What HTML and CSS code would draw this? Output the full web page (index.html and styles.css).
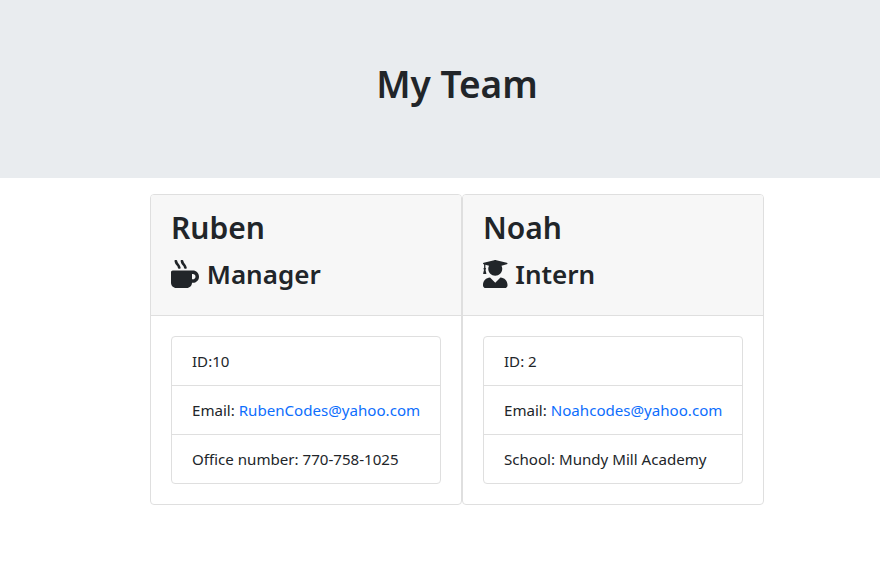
FILE: index.html
```html
<!DOCTYPE html>
<html lang="en">
<head>
    <meta charset="UTF-8">
    <meta name="viewport" content="width=device-width, initial-scale=1.0">
    <title>My Team</title>
    <link rel="stylesheet" href="styles.css">
</head>
<body>
    <header class="banner">
        <h1>My Team</h1>
    </header>

    <main class="team">
        <div class="card card-manager">
            <div class="card-header">
                <h2>Ruben</h2>
                <h3>
                    <svg class="icon" viewBox="0 0 512 512" width="28" height="28"><path d="M127.1 146.5c1.3 7.7 8 13.5 16 13.5h16.5c9.8 0 17.6-8.5 16.3-18-3.8-28.2-16.4-54.2-36.6-74.7-14.4-14.7-23.6-33.3-26.4-53.5C111.8 5.9 105 0 96.8 0H80.4C70.6 0 63 8.5 64.1 18c3.9 31.9 18 61.3 40.6 84.4 12 12.2 19.7 27.5 22.4 44.1zm112 0c1.3 7.7 8 13.5 16 13.5h16.5c9.8 0 17.6-8.5 16.3-18-3.8-28.2-16.4-54.2-36.6-74.7-14.4-14.7-23.6-33.3-26.4-53.5C223.8 5.9 217 0 208.8 0h-16.4c-9.8 0-17.5 8.5-16.3 18 3.9 31.9 18 61.3 40.6 84.4 12 12.2 19.7 27.5 22.4 44.1zM400 192H32c-17.7 0-32 14.3-32 32v192c0 53 43 96 96 96h192c53 0 96-43 96-96h16c61.8 0 112-50.2 112-112s-50.2-112-112-112zm0 160h-16V256h16c26.5 0 48 21.5 48 48s-21.5 48-48 48z"/></svg>
                    Manager
                </h3>
            </div>
            <div class="card-body">
                <ul class="list">
                    <li>ID:10</li>
                    <li>Email: <a href="#">RubenCodes@yahoo.com</a></li>
                    <li>Office number: 770-758-1025</li>
                </ul>
            </div>
        </div>

        <div class="card card-intern">
            <div class="card-header">
                <h2>Noah</h2>
                <h3>
                    <svg class="icon" viewBox="0 0 448 512" width="24.5" height="28"><path d="M319.4 320.6L224 416l-95.4-95.4C57.1 323.7 0 382.2 0 454.4v9.6c0 26.5 21.5 48 48 48h352c26.5 0 48-21.5 48-48v-9.6c0-72.2-57.1-130.7-128.6-133.8zM13.6 79.8l6.4 1.5v58.4c-7 4.2-12 11.5-12 20.3 0 8.4 4.6 15.4 11.1 19.7L3.5 242c-1.7 6.9 2.1 14 7.6 14h41.8c5.5 0 9.3-7.1 7.6-14l-15.6-62.3C51.4 175.4 56 168.4 56 160c0-8.8-5-16.1-12-20.3V87.1l66 15.9c-8.6 17.2-14 36.4-14 57 0 70.7 57.3 128 128 128s128-57.3 128-128c0-20.6-5.3-39.8-14-57l96.3-23.2c18.2-4.4 18.2-27.1 0-31.5l-190.4-46c-13-3.1-26.7-3.1-39.7 0L13.6 48.2c-18.1 4.4-18.1 27.2 0 31.6z"/></svg>
                    Intern
                </h3>
            </div>
            <div class="card-body">
                <ul class="list">
                    <li>ID: 2</li>
                    <li>Email: <a href="#">Noahcodes@yahoo.com</a></li>
                    <li>School: Mundy Mill Academy</li>
                </ul>
            </div>
        </div>
    </main>
</body>
</html>
```

FILE: styles.css
```css
body {
    font-family: "Noto Sans", "Open Sans", sans-serif;
    font-size: 15.1px;
    line-height: 24px;
    color: #212529;
    background-color: #fff;
    margin: 0;
}
.banner {
    background-color: #e9ecef;
    height: 178px;
    padding-top: 60px;
    box-sizing: border-box;
    text-align: center;
}
h1 {
    font-size: 37px;
    font-weight: 600;
    line-height: 48px;
    margin: 0 0 0 34px;
}
.team {
    display: flex;
    padding: 16px 0 0 150px;
}
.card {
    background-color: #fff;
    border: 1px solid #dfdfdf;
    border-radius: 4px;
    box-sizing: border-box;
}
.card-manager {
    width: 312px;
}
.card-intern {
    width: 302px;
}
.card-header {
    background-color: #f7f7f7;
    border-bottom: 1px solid #dfdfdf;
    border-radius: 3px 3px 0 0;
    padding: 14px 20px 16px;
}
h2 {
    font-size: 30px;
    font-weight: 600;
    line-height: 38px;
    margin: 0 0 10px;
}
h3 {
    font-size: 26px;
    font-weight: 600;
    line-height: 34px;
    margin: 0 0 8px;
}
.icon {
    fill: #212529;
    vertical-align: -4px;
    margin-right: 1px;
}
.card-body {
    padding: 20px;
}
.list {
    list-style: none;
    margin: 0;
    padding: 0;
    border: 1px solid #dfdfdf;
    border-radius: 4px;
}
.list li {
    padding: 12px 20px;
    border-bottom: 1px solid #dfdfdf;
    white-space: nowrap;
}
.list li:last-child {
    border-bottom: none;
}
a {
    color: #0d6efd;
    text-decoration: none;
}
```
